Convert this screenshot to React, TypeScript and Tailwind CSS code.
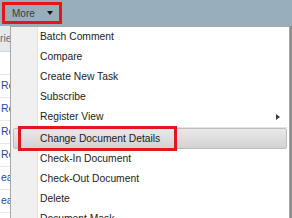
import React from "react"

const items = ["Batch Comment", "Compare", "Create New Task", "Subscribe", "Register View"]
const itemsAfter = ["Check-In Document", "Check-Out Document", "Delete", "Document Mask"]
const rows = ["", "Review", "Review", "Review", "Review", "ead", "ead"]

export default function App() {
  return (
    <div className="relative w-[292px] h-[218px] overflow-hidden bg-white font-['Liberation_Sans',Arial,sans-serif]">
      {/* toolbar */}
      <div className="h-[26px] bg-[#98aebd] flex items-start pt-[2px] pl-[2px]">
        <button className="w-[60px] h-[22px] border-[3px] border-[#e8141b] flex items-center pl-[7px] text-[10px] text-[#3b3b3b]">
          More
          <span className="ml-[12px] w-0 h-0 border-l-[3.5px] border-r-[3.5px] border-t-[4px] border-l-transparent border-r-transparent border-t-[#111]" />
        </button>
      </div>

      {/* page underneath */}
      <div className="text-[10.5px]">
        <div className="h-[26px] bg-[#e6e9ec] border-b border-[#cfd6dc] flex items-center pl-0 text-[#5b6b79]">rie</div>
        {rows.map((r, i) => (
          <div key={i} className="h-[23px] border-b border-[#e8e8e8] flex items-center pl-[1px] text-[#2346c4]">
            {r}
          </div>
        ))}
      </div>

      {/* dropdown menu */}
      <div className="absolute left-[10px] top-[26px] w-[280px] h-[200px] bg-white border border-[#a7a7a7] shadow-[3px_0_0_#8c8c8c] bg-[linear-gradient(to_right,#f0f0f0_26px,#e3e3e3_26px,#e3e3e3_27px,#ffffff_27px)] text-[10.3px] text-[#1c1c1c]">
        {items.map((t) => (
          <div key={t} className="relative h-[20px] flex items-center pl-[29px]">
            {t}
            {t === "Register View" && (
              <span className="absolute right-[9px] top-[7px] w-0 h-0 border-t-[3.5px] border-b-[3.5px] border-l-[4px] border-t-transparent border-b-transparent border-l-[#3a3a3a]" />
            )}
          </div>
        ))}
        <div className="ml-[29px] mr-[2px] h-px bg-[#e4e4e4]" />
        <div className="relative mx-[2px] h-[21px] flex items-center pl-[26px] rounded-[2px] border border-[#bdbdbd] bg-[linear-gradient(to_bottom,#e9e9e9,#d2d2d2)]">
          Change Document Details
          <span className="absolute left-[4px] top-[-3px] w-[159px] h-[25px] border-[3px] border-[#e8141b]" />
        </div>
        {itemsAfter.map((t) => (
          <div key={t} className="h-[20px] flex items-center pl-[29px]">
            {t}
          </div>
        ))}
      </div>
    </div>
  )
}
